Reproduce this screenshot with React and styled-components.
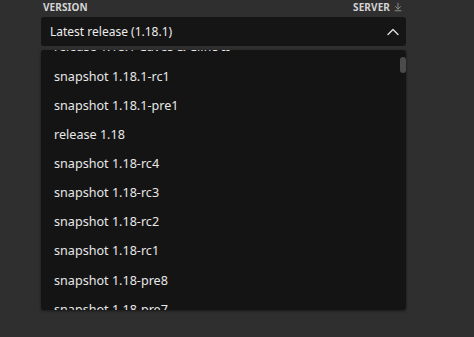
import React, { useEffect, useRef } from 'react';
import styled, { createGlobalStyle } from 'styled-components';
import { ChevronUp, ArrowDownToLine } from 'lucide-react';

//------------------------------------------------------------------------------
// DATA:
//------------------------------------------------------------------------------
const buildVersions = () => {
  const list = [
    'Latest release (1.18.1)',
    'Latest snapshot (1.18.1)',
    'release 1.18.1',
    'release 1.18.1 Caves & Cliffs II',
    'snapshot 1.18.1-rc1',
    'snapshot 1.18.1-pre1',
    'release 1.18',
    'snapshot 1.18-rc4',
    'snapshot 1.18-rc3',
    'snapshot 1.18-rc2',
    'snapshot 1.18-rc1',
  ];
  for (let i = 8; i >= 1; i -= 1) list.push(`snapshot 1.18-pre${i}`);
  const weeks = ['44a', '43a', '42a', '41a', '40a', '39a', '38a', '37a'];
  weeks.forEach((w) => list.push(`snapshot 21w${w}`));
  const olds = ['1.17.1', '1.17', '1.16.5', '1.16.4', '1.16.3', '1.16.2', '1.16.1', '1.16',
    '1.15.2', '1.15.1', '1.15', '1.14.4', '1.14.3', '1.14.2', '1.14.1', '1.14'];
  olds.forEach((v) => {
    list.push(`release ${v}`);
    for (let i = 4; i >= 1; i -= 1) list.push(`snapshot ${v}-pre${i}`);
    list.push(`snapshot ${v}-rc1`);
  });
  return list;
};

const versions = buildVersions();
const SCROLL_TOP = 113;

//------------------------------------------------------------------------------
// STYLES:
//------------------------------------------------------------------------------
const GlobalStyle = createGlobalStyle`
  html, body {
    margin: 0;
    padding: 0;
    background: #2f2f2f;
  }
  body {
    font-family: "Noto Sans", "Open Sans", sans-serif;
    color: #e6e6e6;
  }
`;
//------------------------------------------------------------------------------
const Page = styled.div`
  width: 474px;
  height: 337px;
  padding-left: 41px;
  box-sizing: border-box;
  overflow: hidden;
`;
//------------------------------------------------------------------------------
const Field = styled.div`
  width: 365px;
  display: flex;
  flex-direction: column;
`;
//------------------------------------------------------------------------------
const LabelRow = styled.div`
  height: 17px;
  display: flex;
  align-items: flex-start;
  justify-content: space-between;
  padding: 0 3px 0 2px;
`;
//------------------------------------------------------------------------------
const Label = styled.span`
  display: flex;
  align-items: center;
  gap: 3px;
  font-size: 10px;
  line-height: 14px;
  font-weight: 700;
  letter-spacing: 0.1px;
  color: #d4d4d4;
`;
//------------------------------------------------------------------------------
const Select = styled.div`
  height: 29px;
  display: flex;
  align-items: center;
  justify-content: space-between;
  padding: 0 3px 0 9px;
  background: #151515;
  border-radius: 3px;
  font-size: 12px;
  color: #ececec;
`;
//------------------------------------------------------------------------------
const ListFrame = styled.div`
  position: relative;
  margin-top: 4px;
  height: 260px;
  background: #141414;
  border-radius: 3px;
  box-shadow: 0 1px 3px rgba(0, 0, 0, 0.5);
  overflow: hidden;
`;
//------------------------------------------------------------------------------
const List = styled.div`
  height: 100%;
  overflow-y: scroll;
  padding-top: 8px;
  box-sizing: border-box;
  scrollbar-width: none;

  &::-webkit-scrollbar {
    display: none;
  }
`;
//------------------------------------------------------------------------------
const Thumb = styled.div`
  position: absolute;
  right: 0;
  width: 6px;
  height: 16px;
  border-radius: 3px;
  background: #4b4b4b;
`;
//------------------------------------------------------------------------------
const Item = styled.div`
  height: 29.15px;
  line-height: 29.15px;
  padding-left: 13px;
  font-size: 12.6px;
  color: #e8e8e8;
  white-space: nowrap;
`;
//------------------------------------------------------------------------------
// COMPONENT:
//------------------------------------------------------------------------------
const App = () => {
  const listRef = useRef(null);

  useEffect(() => {
    if (listRef.current) listRef.current.scrollTop = SCROLL_TOP;
  }, []);

  return (
    <Page>
      <GlobalStyle />
      <Field>
        <LabelRow>
          <Label>VERSION</Label>
          <Label>
            SERVER
            <ArrowDownToLine size={10} color="#9a9a9a" strokeWidth={2} />
          </Label>
        </LabelRow>
        <Select>
          Latest release (1.18.1)
          <ChevronUp size={20} color="#e0e0e0" strokeWidth={1.6} />
        </Select>
        <ListFrame>
          <List ref={listRef}>
            {versions.map((v) => (
              <Item key={v}>{v}</Item>
            ))}
          </List>
          <Thumb style={{ top: 7 }} />
        </ListFrame>
      </Field>
    </Page>
  );
};

export default App;
